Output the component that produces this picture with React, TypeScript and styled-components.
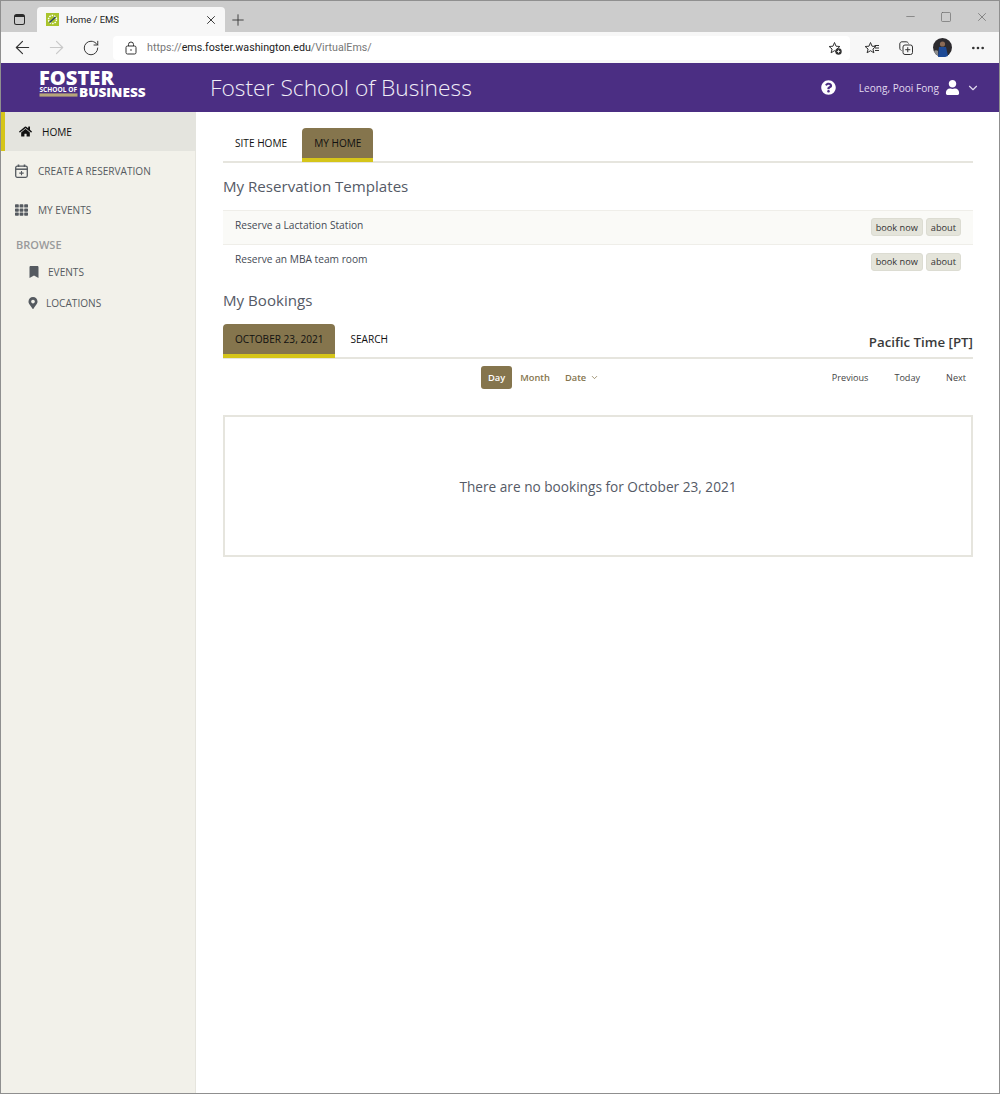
import styled, { createGlobalStyle } from "styled-components";
import { FaHome, FaQuestionCircle, FaUser, FaBookmark, FaMapMarkerAlt, FaTh } from "react-icons/fa";
import { ArrowLeft, ArrowRight, RotateCw, X, Plus, Minus, Square, ChevronDown, MoreHorizontal } from "lucide-react";

const GlobalStyle = createGlobalStyle`
    html, body {
        margin: 0;
        padding: 0;
        background: #fff;
    }
    body {
        font-family: "Open Sans", "Liberation Sans", sans-serif;
        color: #454b55;
    }
    * {
        box-sizing: border-box;
    }
`;

const Window = styled.div`
    width: 1000px;
    height: 1094px;
    display: flex;
    flex-direction: column;
    border: 1px solid #8f8f8f;
    overflow: hidden;
`;

const TabStrip = styled.div`
    height: 31px;
    flex: none;
    background: #cccccc;
    display: flex;
    align-items: flex-end;
    color: #333;
`;

const TabToggle = styled.div`
    width: 36px;
    height: 31px;
    padding-top: 6px;
    display: flex;
    align-items: center;
    justify-content: center;
`;

const TabFrame = styled.div`
    width: 11px;
    height: 11px;
    border: 1.5px solid #2a2a2a;
    border-top-width: 3px;
    border-radius: 2.5px;
`;

const BrowserTab = styled.div`
    width: 188px;
    height: 25px;
    background: #f7f7f7;
    border-radius: 4px 4px 0 0;
    display: flex;
    align-items: center;
    padding: 0 7px 0 9px;
    font-family: Roboto, sans-serif;
    font-size: 9.4px;
    color: #222;
`;

const Favicon = styled.svg`
    width: 13px;
    height: 13px;
    margin-right: 7px;
    flex: none;
`;

const TabTitle = styled.span`
    flex: 1;
`;

const NewTab = styled.div`
    width: 26px;
    height: 31px;
    padding-top: 6px;
    display: flex;
    align-items: center;
    justify-content: center;
    color: #333;
`;

const WindowButtons = styled.div`
    margin-left: auto;
    height: 31px;
    display: flex;
    align-items: center;
    gap: 23px;
    padding: 0 10px 0 0;
    color: #666;
`;

const Toolbar = styled.div`
    height: 31px;
    flex: none;
    background: #f7f7f7;
    display: flex;
    align-items: center;
    padding-left: 4px;
    color: #333;
`;

const NavButton = styled.div<{ $dim?: boolean }>`
    width: 34.5px;
    display: flex;
    justify-content: center;
    color: ${(p) => (p.$dim ? "#c9c9c9" : "#333")};
`;

const AddressBar = styled.div`
    width: 737px;
    height: 24px;
    margin-left: 4.5px;
    background: #fff;
    border-radius: 4px;
    display: flex;
    align-items: center;
    padding: 0 8px 0 11px;
    font-family: Roboto, sans-serif;
    font-size: 10.7px;
    color: #777;
`;

const Url = styled.span`
    flex: 1;
    margin-left: 9px;
    b {
        font-weight: 400;
        color: #222;
    }
`;

const ToolIcons = styled.div`
    flex: 1;
    display: flex;
    align-items: center;
    padding-left: 15px;
    gap: 20px;
`;

const ChromeIcon = styled.svg`
    width: 14px;
    height: 14px;
    flex: none;
    fill: none;
    stroke: #333;
    stroke-width: 1;
    stroke-linejoin: round;
`;

const Avatar = styled.svg`
    width: 19px;
    height: 19px;
    flex: none;
    margin-right: -2px;
`;

const Header = styled.header`
    height: 49px;
    flex: none;
    background: #4b2e83;
    display: flex;
    align-items: center;
    color: #fff;
`;

const LogoMark = styled.svg`
    width: 209px;
    height: 49px;
    flex: none;
    font-family: "Open Sans", sans-serif;
    font-weight: 800;
    fill: #fff;
`;

const SiteTitle = styled.h1`
    margin: 0;
    font-size: 22.8px;
    font-weight: 300;
    color: #f1eef8;
`;

const UserArea = styled.div`
    margin-left: auto;
    display: flex;
    align-items: center;
    padding-right: 19px;
    font-size: 10.1px;
    color: #e0d9ef;
`;

const HelpIcon = styled(FaQuestionCircle)`
    font-size: 15px;
    margin-right: 23px;
    color: #fff;
`;

const UserIcon = styled(FaUser)`
    font-size: 15px;
    margin: 0 6px 0 6px;
    color: #fff;
`;

const Body = styled.div`
    flex: 1;
    display: flex;
    min-height: 0;
`;

const Sidebar = styled.nav`
    width: 195px;
    flex: none;
    background: #f2f1ea;
    border-right: 1px solid #e6e5de;
    display: flex;
    flex-direction: column;
`;

const NavItem = styled.div<{ $active?: boolean }>`
    width: ${(p) => (p.$active ? "195px" : "auto")};
    height: 39px;
    flex: none;
    display: flex;
    align-items: center;
    gap: 10px;
    padding-left: 14px;
    font-size: 10.1px;
    background: ${(p) => (p.$active ? "#e4e4de" : "transparent")};
    border-left: ${(p) => (p.$active ? "4px solid #d5c51a" : "none")};
    color: ${(p) => (p.$active ? "#111" : "#555a60")};
`;

const NavIconSlot = styled.span`
    width: 13px;
    display: flex;
    justify-content: center;
    flex: none;
`;

const CalendarIcon = styled.svg`
    width: 13px;
    height: 14px;
    flex: none;
    fill: none;
    stroke: #555a60;
    stroke-width: 1.3;
`;

const BrowseLabel = styled.div`
    font-size: 11px;
    font-weight: 600;
    color: #999a9b;
    padding: 8px 0 0 15px;
    height: 27px;
    line-height: 16px;
`;

const SubItem = styled.div<{ $pad: number; $gap: number }>`
    height: 31px;
    flex: none;
    display: flex;
    align-items: center;
    padding-left: ${(p) => p.$pad}px;
    gap: ${(p) => p.$gap}px;
    font-size: 10.1px;
    color: #555a60;
`;

const Main = styled.main`
    flex: 1;
    padding: 16px 26px 0 27px;
    display: flex;
    flex-direction: column;
`;

const Tabs = styled.div<{ $top?: number }>`
    display: flex;
    align-items: flex-end;
    gap: 3px;
    height: 35px;
    flex: none;
    margin-top: ${(p) => p.$top ?? 0}px;
    border-bottom: 2px solid #e6e5de;
`;

const Tab = styled.div<{ $active?: boolean }>`
    height: 34px;
    margin-bottom: -1px;
    padding: 0 12px;
    display: flex;
    align-items: center;
    font-size: 10.1px;
    color: #111;
    background: ${(p) => (p.$active ? "#85754d" : "transparent")};
    border-bottom: 4px solid ${(p) => (p.$active ? "#d5c51a" : "transparent")};
    border-radius: 4px 4px 0 0;
`;

const TimeZone = styled.div`
    margin-left: auto;
    align-self: center;
    font-size: 13.3px;
    font-weight: 600;
    color: #3a3a3a;
    padding-top: 3px;
`;

const SectionTitle = styled.h2<{ $gap: number }>`
    margin: 0;
    margin-top: ${(p) => p.$gap}px;
    font-size: 15.1px;
    line-height: 20px;
    font-weight: 400;
    color: #555a66;
`;

const TemplateList = styled.div`
    margin-top: 14px;
    border-top: 1px solid #efeee9;
`;

const TemplateRow = styled.div<{ $shaded?: boolean }>`
    height: 34px;
    display: flex;
    align-items: center;
    justify-content: space-between;
    padding: 0 12px 6px 12px;
    font-size: 10.2px;
    color: #454b55;
    background: ${(p) => (p.$shaded ? "#fafaf7" : "#fff")};
    border-bottom: ${(p) => (p.$shaded ? "1px solid #efeee9" : "none")};
`;

const RowButtons = styled.div`
    display: flex;
    gap: 3px;
    padding-top: 5px;
`;

const SmallButton = styled.button`
    height: 18px;
    padding: 0 4px;
    border: 1px solid #dcdcd2;
    border-radius: 3px;
    background: #e4e4da;
    font: inherit;
    font-size: 9.2px;
    color: #333;
`;

const ViewBar = styled.div`
    display: flex;
    align-items: center;
    height: 23px;
    margin-top: 7px;
    flex: none;
    font-size: 9.3px;
`;

const ViewModes = styled.div`
    margin-left: 258px;
    display: flex;
    align-items: center;
    gap: 1px;
`;

const ViewMode = styled.div<{ $active?: boolean }>`
    height: 23px;
    padding: 0 7px;
    display: flex;
    align-items: center;
    gap: 4px;
    font-weight: 600;
    border-radius: 3px;
    color: ${(p) => (p.$active ? "#fff" : "#85754d")};
    background: ${(p) => (p.$active ? "#85754d" : "transparent")};
`;

const Pager = styled.div`
    margin-left: auto;
    display: flex;
    gap: 26px;
    padding-right: 7px;
    font-size: 9.1px;
    color: #444;
`;

const EmptyBox = styled.div`
    height: 142px;
    margin-top: 26px;
    flex: none;
    border: 2px solid #e6e5de;
    display: flex;
    align-items: center;
    justify-content: center;
    font-size: 13.65px;
    color: #555a66;
`;

const STAR = "M6.5 1.5 8 5.2l3.9.3-3 2.5 1 3.8-3.4-2.1-3.4 2.1 1-3.8-3-2.5 3.9-.3z";

function SiteIcon() {
    return (
        <Favicon viewBox="0 0 13 13">
            <rect width="13" height="13" fill="#a9c42c" />
            <circle cx="6.5" cy="6.5" r="4" fill="none" stroke="#fff" strokeWidth="1.5" strokeDasharray="1.5 1" />
            <path d="M3.5 9.5 9.5 4" stroke="#24406e" strokeWidth="1.4" />
        </Favicon>
    );
}

function StarAddIcon() {
    return (
        <ChromeIcon viewBox="0 0 14 14">
            <path d={STAR} />
            <circle cx="10.5" cy="10.5" r="3.2" fill="#333" stroke="none" />
            <path d="M10.5 8.9v3.2M8.9 10.5h3.2" stroke="#fff" strokeWidth="0.8" />
        </ChromeIcon>
    );
}

function FavoritesIcon() {
    return (
        <ChromeIcon viewBox="0 0 14 14">
            <path d="M5.5 1.5 7 5.2l3.9.3-3 2.5 1 3.8-3.4-2.1-3.4 2.1 1-3.8-3-2.5 3.9-.3z" />
            <path d="M9.5 4.5H14M10 7H14M10 9.5H14" />
        </ChromeIcon>
    );
}

function CollectionsIcon() {
    return (
        <ChromeIcon viewBox="0 0 14 14">
            <path d="M2.5 9.5C1.3 9 .8 8.2.8 7V3C.8 1.700 1.700.8 3 .8h4c1.200 0 2 .5 2.500 1.700" />
            <rect x="4" y="4" width="9.500" height="9.500" rx="2" />
            <path d="M8.750 6.200v5M6.250 8.700h5" />
        </ChromeIcon>
    );
}

function ReservationIcon() {
    return (
        <CalendarIcon viewBox="0 0 13 14">
            <rect x="0.7" y="2.2" width="11.6" height="11.100" rx="1.500" />
            <path d="M0.700 5.200h11.600" strokeWidth="1.500" />
            <path d="M3.500 0.500v2.500M9.500 0.500v2.500" strokeWidth="1.600" />
            <path d="M6.500 6.900v4.400M4.300 9.100h4.400" strokeWidth="1.100" />
        </CalendarIcon>
    );
}

function FosterLogo() {
    return (
        <LogoMark viewBox="0 0 209 49">
            <text x="38" y="22" fontSize="18.6" textLength="75" lengthAdjust="spacingAndGlyphs">FOSTER</text>
            <text x="38.5" y="29.4" fontSize="6.6" fontWeight="700" textLength="37.5" lengthAdjust="spacingAndGlyphs">SCHOOL OF</text>
            <rect x="38.5" y="30.4" width="38" height="3.2" fill="#b7a57a" />
            <text x="78" y="33.7" fontSize="12.8" textLength="66.7" lengthAdjust="spacingAndGlyphs">BUSINESS</text>
        </LogoMark>
    );
}

function App() {
    return (
        <>
            <GlobalStyle />
            <Window>
                <TabStrip>
                    <TabToggle>
                        <TabFrame />
                    </TabToggle>
                    <BrowserTab>
                        <SiteIcon />
                        <TabTitle>Home / EMS</TabTitle>
                        <X size={14} strokeWidth={1.5} />
                    </BrowserTab>
                    <NewTab>
                        <Plus size={18} strokeWidth={1.2} />
                    </NewTab>
                    <WindowButtons>
                        <Minus size={13} strokeWidth={1.2} />
                        <Square size={12} strokeWidth={1.3} />
                        <X size={14} strokeWidth={1.2} />
                    </WindowButtons>
                </TabStrip>
                <Toolbar>
                    <NavButton>
                        <ArrowLeft size={21} strokeWidth={1.3} />
                    </NavButton>
                    <NavButton $dim>
                        <ArrowRight size={21} strokeWidth={1.3} />
                    </NavButton>
                    <NavButton>
                        <RotateCw size={18} strokeWidth={1.3} />
                    </NavButton>
                    <AddressBar>
                        <ChromeIcon viewBox="0 0 14 14">
                            <rect x="2" y="5" width="10" height="8" rx="1.5" />
                            <path d="M4.500 5V3.500a2.500 2.500 0 0 1 5 0V5" />
                            <circle cx="7" cy="9" r="0.8" fill="#333" stroke="none" />
                        </ChromeIcon>
                        <Url>
                            https://<b>ems.foster.washington.edu</b>/VirtualEms/
                        </Url>
                        <StarAddIcon />
                    </AddressBar>
                    <ToolIcons>
                        <FavoritesIcon />
                        <CollectionsIcon />
                        <Avatar viewBox="0 0 19 19">
                            <circle cx="9.500" cy="9.500" r="9.500" fill="#2c2a2e" />
                            <path d="M1 13c1-1 3-1 4 0v5C3 17 2 15 1 13z" fill="#8d8d8d" />
                            <path d="M5 19l1-10 7 0 2 9-3 1z" fill="#1d4a96" />
                            <circle cx="9.500" cy="6" r="2.600" fill="#8a6a55" />
                        </Avatar>
                        <MoreHorizontal size={16} strokeWidth={2} />
                    </ToolIcons>
                </Toolbar>
                <Header>
                    <FosterLogo />
                    <SiteTitle>Foster School of Business</SiteTitle>
                    <UserArea>
                        <HelpIcon />
                        Leong, Pooi Fong
                        <UserIcon />
                        <ChevronDown size={14} />
                    </UserArea>
                </Header>
                <Body>
                    <Sidebar>
                        <NavItem $active>
                            <NavIconSlot>
                                <FaHome size={13} />
                            </NavIconSlot>
                            HOME
                        </NavItem>
                        <NavItem>
                            <NavIconSlot>
                                <ReservationIcon />
                            </NavIconSlot>
                            CREATE A RESERVATION
                        </NavItem>
                        <NavItem>
                            <NavIconSlot>
                                <FaTh size={14} />
                            </NavIconSlot>
                            MY EVENTS
                        </NavItem>
                        <BrowseLabel>BROWSE</BrowseLabel>
                        <SubItem $pad={27} $gap={8}>
                            <FaBookmark size={12} />
                            EVENTS
                        </SubItem>
                        <SubItem $pad={26} $gap={7}>
                            <FaMapMarkerAlt size={12} />
                            LOCATIONS
                        </SubItem>
                    </Sidebar>
                    <Main>
                        <Tabs>
                            <Tab>SITE HOME</Tab>
                            <Tab $active>MY HOME</Tab>
                        </Tabs>
                        <SectionTitle $gap={13}>My Reservation Templates</SectionTitle>
                        <TemplateList>
                            <TemplateRow $shaded>
                                Reserve a Lactation Station
                                <RowButtons>
                                    <SmallButton>book now</SmallButton>
                                    <SmallButton>about</SmallButton>
                                </RowButtons>
                            </TemplateRow>
                            <TemplateRow>
                                Reserve an MBA team room
                                <RowButtons>
                                    <SmallButton>book now</SmallButton>
                                    <SmallButton>about</SmallButton>
                                </RowButtons>
                            </TemplateRow>
                        </TemplateList>
                        <SectionTitle $gap={11}>My Bookings</SectionTitle>
                        <Tabs $top={14}>
                            <Tab $active>OCTOBER 23, 2021</Tab>
                            <Tab>SEARCH</Tab>
                            <TimeZone>Pacific Time [PT]</TimeZone>
                        </Tabs>
                        <ViewBar>
                            <ViewModes>
                                <ViewMode $active>Day</ViewMode>
                                <ViewMode>Month</ViewMode>
                                <ViewMode>
                                    Date <ChevronDown size={9} />
                                </ViewMode>
                            </ViewModes>
                            <Pager>
                                <span>Previous</span>
                                <span>Today</span>
                                <span>Next</span>
                            </Pager>
                        </ViewBar>
                        <EmptyBox>There are no bookings for October 23, 2021</EmptyBox>
                    </Main>
                </Body>
            </Window>
        </>
    );
}

export default App;
